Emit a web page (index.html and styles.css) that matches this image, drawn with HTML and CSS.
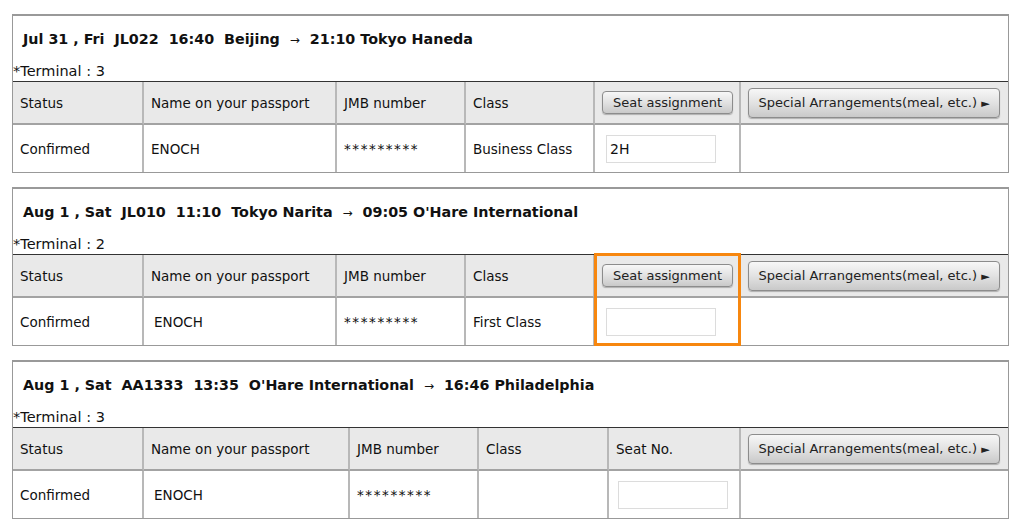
FILE: index.html
```html
<!DOCTYPE html>
<html lang="en">
<head>
    <meta charset="UTF-8">
    <title>Seat assignment</title>
    <link rel="stylesheet" href="styles.css">
</head>
<body>
    <div class="flight">
        <h2 class="flight-title">Jul 31 , Fri&nbsp; JL022&nbsp; 16:40&nbsp; Beijing&nbsp; <span class="arrow">→</span>&nbsp; 21:10 Tokyo Haneda</h2>
        <p class="terminal">*Terminal : 3</p>
        <table class="pax">
            <colgroup>
                <col class="c-status"><col class="c-name"><col class="c-jmb"><col class="c-class"><col class="c-seat"><col>
            </colgroup>
            <tr class="pax-head">
                <th>Status</th>
                <th>Name on your passport</th>
                <th>JMB number</th>
                <th>Class</th>
                <th><button class="btn btn-seat">Seat assignment</button></th>
                <th><button class="btn btn-special">Special Arrangements(meal, etc.) <span class="tri">►</span></button></th>
            </tr>
            <tr class="pax-row">
                <td>Confirmed</td>
                <td>ENOCH</td>
                <td class="masked">*********</td>
                <td>Business Class</td>
                <td><input class="seat-input" type="text" value="2H"></td>
                <td></td>
            </tr>
        </table>
    </div>

    <div class="flight">
        <h2 class="flight-title">Aug 1 , Sat&nbsp; JL010&nbsp; 11:10&nbsp; Tokyo Narita&nbsp; <span class="arrow">→</span>&nbsp; 09:05 O'Hare International</h2>
        <p class="terminal">*Terminal : 2</p>
        <table class="pax">
            <colgroup>
                <col class="c-status"><col class="c-name"><col class="c-jmb"><col class="c-class"><col class="c-seat"><col>
            </colgroup>
            <tr class="pax-head">
                <th>Status</th>
                <th>Name on your passport</th>
                <th>JMB number</th>
                <th>Class</th>
                <th><button class="btn btn-seat">Seat assignment</button></th>
                <th><button class="btn btn-special">Special Arrangements(meal, etc.) <span class="tri">►</span></button></th>
            </tr>
            <tr class="pax-row">
                <td>Confirmed</td>
                <td class="name-indent">ENOCH</td>
                <td class="masked">*********</td>
                <td>First Class</td>
                <td><input class="seat-input" type="text" value=""></td>
                <td></td>
            </tr>
        </table>
        <div class="highlight"></div>
    </div>

    <div class="flight">
        <h2 class="flight-title">Aug 1 , Sat&nbsp; AA1333&nbsp; 13:35&nbsp; O'Hare International&nbsp; <span class="arrow">→</span>&nbsp; 16:46 Philadelphia</h2>
        <p class="terminal">*Terminal : 3</p>
        <table class="pax">
            <colgroup>
                <col class="c-status"><col class="c-name-wide"><col class="c-jmb"><col class="c-class-wide"><col class="c-seatno"><col>
            </colgroup>
            <tr class="pax-head">
                <th>Status</th>
                <th>Name on your passport</th>
                <th>JMB number</th>
                <th>Class</th>
                <th>Seat No.</th>
                <th><button class="btn btn-special">Special Arrangements(meal, etc.) <span class="tri">►</span></button></th>
            </tr>
            <tr class="pax-row">
                <td>Confirmed</td>
                <td class="name-indent">ENOCH</td>
                <td class="masked">*********</td>
                <td></td>
                <td><input class="seat-input seat-input-wide" type="text" value=""></td>
                <td></td>
            </tr>
        </table>
    </div>
</body>
</html>
```
FILE: styles.css
```css
* {
    margin: 0;
    padding: 0;
    box-sizing: border-box;
}

body {
    font-family: 'DejaVu Sans', Verdana, sans-serif;
    color: #111;
    background: #fff;
    padding: 14px 0 0 12px;
}

.flight {
    position: relative;
    width: 997px;
    border: 1px solid #999;
    border-top-width: 2px;
    margin-bottom: 14px;
}

.flight-title {
    font-size: 14.3px;
    font-weight: bold;
    line-height: 18px;
    padding: 14px 0 13px 10px;
}

.flight-title .arrow {
    font-size: 12px;
    font-weight: normal;
}

.terminal {
    font-size: 14.5px;
    line-height: 18px;
    padding-bottom: 1px;
}

.pax {
    width: 100%;
    table-layout: fixed;
    border-collapse: separate;
    border-spacing: 0;
    border-top: 1px solid #333;
    font-size: 13.5px;
}

.c-status { width: 131px; }
.c-name { width: 193px; }
.c-name-wide { width: 206px; }
.c-jmb { width: 129px; }
.c-class { width: 129px; }
.c-class-wide { width: 130px; }
.c-seat { width: 146px; }
.c-seatno { width: 132px; }

.pax th,
.pax td {
    text-align: left;
    font-weight: normal;
    padding: 0 7px;
    border-right: 2px solid #b8b8b8;
}

.pax th:last-child,
.pax td:last-child {
    border-right: none;
}

.pax-head th {
    background: #e9e9e9;
    height: 43px;
    border-bottom: 2px solid #a3a3a3;
}

.pax-row td {
    height: 47px;
}

.name-indent {
    padding-left: 10px !important;
}

.masked {
    letter-spacing: 1.6px;
}

.btn {
    font-family: 'DejaVu Sans', sans-serif;
    font-size: 13px;
    color: #222;
    border: 1px solid #8c8c8c;
    border-radius: 4px;
    background: linear-gradient(#f7f7f7 0%, #e2e2e2 50%, #c9c9c9 100%);
    box-shadow: 0 1px 1px rgba(0,0,0,0.25);
    cursor: pointer;
}

.btn-seat {
    width: 131px;
    height: 23px;
}

.btn-special {
    width: 252px;
    height: 30px;
}

.btn-special .tri {
    font-size: 11px;
}

.seat-input {
    width: 110px;
    height: 28px;
    margin-left: 4px;
    border: 1px solid #dcdcdc;
    font-family: 'DejaVu Sans', sans-serif;
    font-size: 14px;
    padding-left: 3px;
    color: #111;
}

.seat-input-wide {
    margin-left: 2px;
}

.highlight {
    position: absolute;
    left: 581px;
    top: 64px;
    width: 147px;
    height: 93px;
    border: 3px solid #f7870f;
    pointer-events: none;
}
```
